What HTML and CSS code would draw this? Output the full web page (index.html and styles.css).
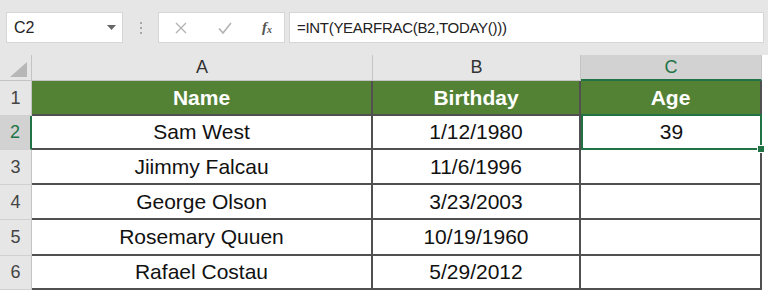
FILE: index.html
```html
<!DOCTYPE html>
<html lang="en">
<head>
    <meta charset="UTF-8">
    <title>YEARFRAC age</title>
    <link rel="stylesheet" href="styles.css">
</head>
<body>
    <div class="formula-bar">
        <div class="name-box">
            <span>C2</span>
            <svg class="drop" width="9" height="5" viewBox="0 0 9 5"><path d="M0 0h9L4.5 5z" fill="#666"/></svg>
        </div>
        <div class="grip"><i></i><i></i><i></i></div>
        <div class="fx-box">
            <svg width="14" height="14" viewBox="0 0 14 14"><path d="M2 2l10 10M12 2L2 12" stroke="#b3b3b3" stroke-width="1.4" fill="none"/></svg>
            <svg width="16" height="14" viewBox="0 0 16 14"><path d="M2 7.5l4 4.5L14 2" stroke="#b3b3b3" stroke-width="1.6" fill="none"/></svg>
            <span class="fx">f<sub>x</sub></span>
        </div>
        <div class="formula">=INT(YEARFRAC(B2,TODAY()))</div>
    </div>

    <div class="sheet">
        <div class="corner"><span class="tri"></span></div>
        <div class="col-head">A</div>
        <div class="col-head">B</div>
        <div class="col-head active">C</div>
        <div class="blank"></div>

        <div class="row-head">1</div>
        <div class="cell head">Name</div>
        <div class="cell head">Birthday</div>
        <div class="cell head">Age</div>
        <div class="blank"></div>

        <div class="row-head active">2</div>
        <div class="cell">Sam West</div>
        <div class="cell">1/12/1980</div>
        <div class="cell selected">39</div>
        <div class="blank"></div>

        <div class="row-head">3</div>
        <div class="cell">Jiimmy Falcau</div>
        <div class="cell">11/6/1996</div>
        <div class="cell"></div>
        <div class="blank"></div>

        <div class="row-head">4</div>
        <div class="cell">George Olson</div>
        <div class="cell">3/23/2003</div>
        <div class="cell"></div>
        <div class="blank"></div>

        <div class="row-head">5</div>
        <div class="cell">Rosemary Quuen</div>
        <div class="cell">10/19/1960</div>
        <div class="cell"></div>
        <div class="blank"></div>

        <div class="row-head">6</div>
        <div class="cell">Rafael Costau</div>
        <div class="cell">5/29/2012</div>
        <div class="cell"></div>
        <div class="blank"></div>
    </div>
</body>
</html>
```

FILE: styles.css
```css
body {
    margin: 0;
    width: 768px;
    height: 298px;
    overflow: hidden;
    background-color: #fff;
    font-family: "Liberation Sans", Arial, sans-serif;
}

.formula-bar {
    display: flex;
    align-items: center;
    height: 55px;
    padding: 0 4px 0 6px;
    background-color: #e6e6e6;
    box-sizing: border-box;
}

.name-box {
    display: flex;
    align-items: center;
    justify-content: space-between;
    width: 117px;
    height: 31px;
    padding: 0 6px 0 7px;
    background-color: #fff;
    border: 1px solid #d6d6d6;
    box-sizing: border-box;
    font-size: 16px;
    color: #222;
}

.grip {
    display: flex;
    flex-direction: column;
    gap: 3px;
    margin: 0 16px 0 17px;
}

.grip i {
    width: 2px;
    height: 2px;
    background-color: #a6a6a6;
}

.fx-box {
    display: flex;
    align-items: center;
    justify-content: space-between;
    width: 127px;
    height: 31px;
    padding: 0 12px 0 15px;
    background-color: #fff;
    border: 1px solid #d6d6d6;
    box-sizing: border-box;
}

.fx {
    font-family: "Liberation Serif", serif;
    font-style: italic;
    font-weight: bold;
    font-size: 15px;
    color: #555;
}

.fx sub {
    font-size: 10px;
    vertical-align: -1px;
}

.formula {
    flex: 1;
    height: 31px;
    margin-left: 4px;
    padding-left: 7px;
    line-height: 30px;
    background-color: #fff;
    border: 1px solid #d6d6d6;
    box-sizing: border-box;
    font-size: 15px;
    color: #222;
    letter-spacing: -0.3px;
}

.sheet {
    display: grid;
    grid-template-columns: 32px 341px 208px 181px 1fr;
    grid-template-rows: 26px 35px 34px 35px 35px 36px 34px;
}

.corner,
.col-head,
.row-head {
    display: flex;
    align-items: center;
    justify-content: center;
    background-color: #e6e6e6;
    color: #333;
    font-size: 18px;
    box-sizing: border-box;
}

.corner {
    position: relative;
    border-right: 1px solid #c4c4c4;
    border-bottom: 1px solid #c4c4c4;
}

.tri {
    position: absolute;
    right: 4px;
    bottom: 3px;
    width: 0;
    height: 0;
    border-left: 17px solid transparent;
    border-bottom: 15px solid #b7b7b7;
}

.col-head {
    border-right: 1px solid #c4c4c4;
    border-bottom: 1px solid #c4c4c4;
}

.col-head.active {
    background-color: #d2d2d2;
    color: #217346;
    border-bottom: 2px solid #217346;
}

.row-head {
    border-right: 1px solid #c4c4c4;
    border-bottom: 1px solid #d0d0d0;
    color: #444;
}

.row-head.active {
    background-color: #d2d2d2;
    color: #217346;
    border-right: 2px solid #217346;
}

.blank {
    background-color: #fff;
}

.cell {
    display: flex;
    align-items: center;
    justify-content: center;
    border-right: 2px solid #505050;
    border-bottom: 2px solid #505050;
    box-sizing: border-box;
    font-size: 21px;
    color: #111;
    background-color: #fff;
}

.cell.head {
    background-color: #548235;
    color: #fff;
    font-weight: bold;
}

.cell.selected {
    position: relative;
    border: 2px solid #217346;
    margin-top: -2px;
}

.cell.selected::after {
    content: "";
    position: absolute;
    right: -5px;
    bottom: -5px;
    width: 6px;
    height: 6px;
    background-color: #217346;
    border: 1px solid #fff;
}
```
